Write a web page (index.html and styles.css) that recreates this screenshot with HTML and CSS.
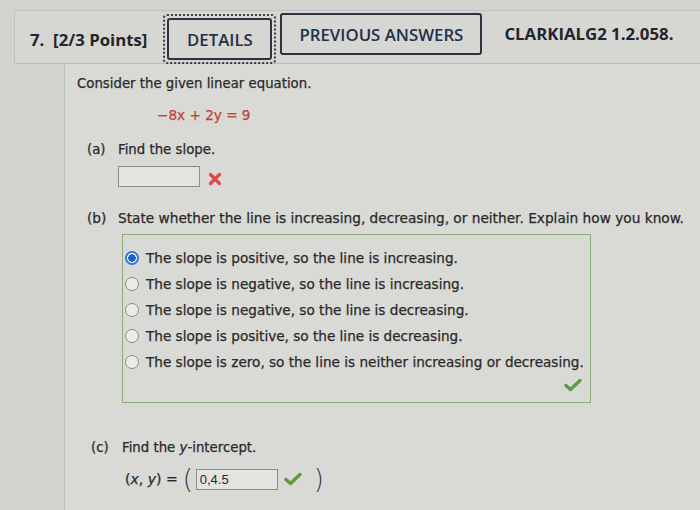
FILE: index.html
```html
<!DOCTYPE html>
<html>
<head>
<meta charset="utf-8">
<link rel="stylesheet" href="styles.css">
</head>
<body>
<div class="header">
  <span class="qnum">7.&nbsp; [2/3 Points]</span>
  <span class="details-wrap"><span class="btn btn-details">DETAILS</span></span>
  <span class="btn btn-prev">PREVIOUS ANSWERS</span>
  <span class="qid">CLARKIALG2 1.2.058.</span>
</div>
<div class="content">
  <p class="intro">Consider the given linear equation.</p>
  <p class="equation">−8<i>x</i> + 2<i>y</i> = 9</p>

  <div class="part part-a">
    <div class="part-head"><span class="plabel">(a)</span><span>Find the slope.</span></div>
    <div class="answer-row slope-row">
      <span class="input"></span>
      <svg class="mark-x" width="14" height="14" viewBox="0 0 14 14"><path d="M2.5 2.5 L11.5 11.5 M11.5 2.5 L2.5 11.5" stroke="#e0484a" stroke-width="3.2" stroke-linecap="round"/></svg>
    </div>
  </div>

  <div class="part part-b">
    <div class="part-head wide"><span class="plabel">(b)</span><span>State whether the line is increasing, decreasing, or neither. Explain how you know.</span></div>
    <div class="choices">
      <div class="choice"><span class="radio checked"></span><span>The slope is positive, so the line is increasing.</span></div>
      <div class="choice"><span class="radio"></span><span>The slope is negative, so the line is increasing.</span></div>
      <div class="choice"><span class="radio"></span><span>The slope is negative, so the line is decreasing.</span></div>
      <div class="choice"><span class="radio"></span><span>The slope is positive, so the line is decreasing.</span></div>
      <div class="choice"><span class="radio"></span><span>The slope is zero, so the line is neither increasing or decreasing.</span></div>
      <div class="choice-check">
        <svg width="18" height="14" viewBox="0 0 18 14"><path d="M2 7.5 L6.5 11.5 L16 2.5" fill="none" stroke="#5a9e3c" stroke-width="3.4" stroke-linecap="round" stroke-linejoin="round"/></svg>
      </div>
    </div>
  </div>

  <div class="part part-c">
    <div class="part-head"><span class="plabel">(c)</span><span>Find the <i>y</i>-intercept.</span></div>
    <div class="answer-row coord-row">
      <span class="coord-label">(<i>x</i>, <i>y</i>) =</span>
      <span class="paren">(</span>
      <span class="input filled">0,4.5</span>
      <svg class="mark-check" width="18" height="14" viewBox="0 0 18 14"><path d="M2 7.5 L6.5 11.5 L16 2.5" fill="none" stroke="#5a9e3c" stroke-width="3.4" stroke-linecap="round" stroke-linejoin="round"/></svg>
      <span class="paren close">)</span>
    </div>
  </div>
</div>
</body>
</html>
```

FILE: styles.css
```css
html, body {
  margin: 0;
  padding: 0;
}
body {
  background: #d3d3cf;
  width: 700px;
  height: 510px;
  overflow: hidden;
  color: #2a2a2a;
  font-family: "DejaVu Sans", Verdana, sans-serif;
  font-size: 12px;
}
.header {
  margin: 10px 0 0 14px;
  height: 52px;
  border-top: 1px solid #c2c2bd;
  border-left: 1px solid #c2c2bd;
  border-bottom: 1px solid #bdbdb8;
  background: #d6d6d2;
  display: flex;
  align-items: center;
  padding-left: 15px;
  font-family: "Open Sans", sans-serif;
  font-weight: 700;
  font-size: 16.8px;
  color: #22252b;
}
.qnum {
  margin-right: 16px;
  margin-top: 4px;
}
.details-wrap {
  padding: 2px;
  border: 2px dotted #3a3f48;
  border-radius: 4px;
  margin-top: 4px;
}
.btn {
  display: flex;
  align-items: center;
  justify-content: center;
  border: 2px solid #2b3340;
  border-radius: 3px;
  font-weight: 600;
  font-size: 16.8px;
  color: #22304a;
}
.btn-details {
  width: 101px;
  height: 38px;
}
.btn-prev {
  width: 198px;
  height: 38px;
  margin-left: 4px;
  margin-top: -6px;
}
.qid {
  margin-left: 22px;
  margin-top: -8px;
}
.content {
  margin-left: 64px;
  border-left: 1px solid #bcbcb7;
  background: #d9d9d5;
  height: 460px;
  padding: 11px 0 0 12px;
  -webkit-text-stroke: 0.25px currentColor;
}
.intro {
  margin: 0;
  font-size: 13.3px;
  line-height: 18px;
}
.equation {
  margin: 14px 0 0 80px;
  color: #c0443a;
  font-size: 13.6px;
  line-height: 17px;
}
.equation i {
  font-style: normal;
}
.part {
  padding-left: 10px;
}
.part-head {
  display: flex;
  font-size: 13.3px;
  line-height: 18px;
  white-space: nowrap;
}
.part-head.wide {
  font-size: 13.7px;
}
.plabel {
  width: 31px;
  flex: none;
}
.part-a {
  margin-top: 17px;
}
.answer-row {
  display: flex;
  align-items: center;
}
.slope-row {
  margin: 7px 0 0 31px;
}
.input {
  display: inline-block;
  width: 77px;
  height: 19px;
  border: 1px solid #8c8c88;
  background: #e3e3df;
  font-family: "Liberation Sans", Arial, sans-serif;
  font-size: 13px;
  line-height: 19px;
  padding-left: 3px;
  box-sizing: content-box;
  -webkit-text-stroke: 0;
}
.mark-x {
  margin-left: 8px;
  margin-top: 4px;
}
.part-b {
  margin-top: 22px;
}
.choices {
  margin: 7px 0 0 35px;
  width: 467px;
  height: 167px;
  border: 1px solid #8fae7e;
  position: relative;
}
.choice {
  display: flex;
  align-items: center;
  height: 26px;
  font-size: 13.6px;
  padding-left: 2px;
  white-space: nowrap;
}
.choice:first-child {
  margin-top: 10px;
}
.radio {
  width: 12px;
  height: 12px;
  border: 1px solid #8a8a88;
  border-radius: 50%;
  background: #ebebe8;
  margin-right: 7px;
  flex: none;
}
.radio.checked {
  border: 2px solid #3a78d8;
  width: 10px;
  height: 10px;
  background: radial-gradient(circle, #1e5fd0 0 3.6px, #ffffff 3.9px);
}
.choice-check {
  position: absolute;
  right: 8px;
  bottom: 7px;
}
.part-c {
  margin-top: 36px;
  padding-left: 14px;
}
.coord-row {
  margin: 10px 0 0 34px;
  font-size: 14px;
}
.coord-label i {
  font-style: italic;
}
.paren {
  font-size: 26px;
  font-weight: 300;
  line-height: 24px;
  margin: 0 3px 0 5px;
  color: #3a3a3a;
  -webkit-text-stroke: 0;
}
.paren.close {
  margin-left: 12px;
}
.mark-check {
  margin-left: 6px;
}
```
